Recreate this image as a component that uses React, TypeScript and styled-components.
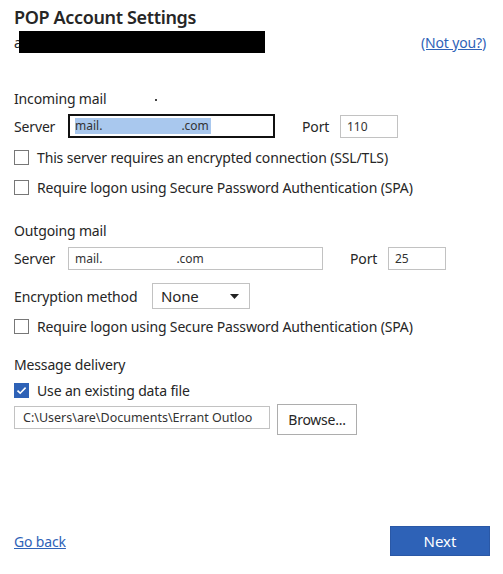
import React, { FC } from "react";
import styled, { createGlobalStyle } from "styled-components";

const GlobalStyle = createGlobalStyle`
  * { box-sizing: border-box; }
  body {
    margin: 0;
    background: #ffffff;
    font-family: "Noto Sans", "Open Sans", sans-serif;
    color: #262626;
  }
`;

const COLORS = {
  text: "#262626",
  link: "#2f63b8",
  border: "#c2c2c2",
  accent: "#2e62b7",
  selection: "#a9c8ee",
};

interface CheckProps {
  checked?: boolean;
  label: string;
  top: number;
}

const CheckRow: FC<CheckProps> = ({ checked, label, top }) => (
  <CheckLine $top={top}>
    <Box $checked={checked}>
      {checked && (
        <svg width="11" height="9" viewBox="0 0 11 9">
          <path d="M1.5 4.6 L4.2 7.2 L9.6 1.6" fill="none" stroke="#fff" strokeWidth="1.6" />
        </svg>
      )}
    </Box>
    <span>{label}</span>
  </CheckLine>
);

export default function App() {
  return (
    <>
      <GlobalStyle />
      <Page>
        <Title>POP Account Settings</Title>
        <AccountRow>
          <Account>
            a<Redacted />
          </Account>
          <Link>(Not you?)</Link>
        </AccountRow>

        <Heading $top={35}>
          Incoming mail<Dot />
        </Heading>
        <FieldRow $top={4}>
          <Label $width={54}>Server</Label>
          <TextBox $width={207} $focused>
            <Selected>
              mail.<Gap $width={79} />.com
            </Selected>
          </TextBox>
          <PortLabel>Port</PortLabel>
          <TextBox $width={58}>110</TextBox>
        </FieldRow>
        <CheckRow top={8} label="This server requires an encrypted connection (SSL/TLS)" />
        <CheckRow top={10} label="Require logon using Secure Password Authentication (SPA)" />

        <Heading $top={24}>Outgoing mail</Heading>
        <FieldRow $top={4}>
          <Label $width={54}>Server</Label>
          <TextBox $width={255}>
            mail.<Gap $width={74} />.com
          </TextBox>
          <PortLabel>Port</PortLabel>
          <TextBox $width={58}>25</TextBox>
        </FieldRow>
        <FieldRow $top={12}>
          <Label $width={138}>Encryption method</Label>
          <Select>
            <span>None</span>
            <svg width="9" height="5" viewBox="0 0 9 5">
              <path d="M0 0 H9 L4.5 5 Z" fill="#222" />
            </svg>
          </Select>
        </FieldRow>
        <CheckRow top={7} label="Require logon using Secure Password Authentication (SPA)" />

        <Heading $top={19}>Message delivery</Heading>
        <CheckRow top={5} checked label="Use an existing data file" />
        <PathRow>
          <PathBox>C:\Users\are\Documents\Errant Outloo</PathBox>
          <Browse>Browse...</Browse>
        </PathRow>

        <Footer>
          <Link>Go back</Link>
          <Next>Next</Next>
        </Footer>
      </Page>
    </>
  );
}

const Page = styled.div`
  height: 574px;
  padding: 0 14px 18px 14px;
  display: flex;
  flex-direction: column;
  font-size: 14px;
  letter-spacing: -0.15px;
`;

const Title = styled.h1`
  margin: 6px 0 0 0;
  height: 22px;
  line-height: 22px;
  font-size: 18px;
  font-weight: 600;
  letter-spacing: -0.35px;
  color: ${COLORS.text};
`;

const AccountRow = styled.div`
  margin-top: 2px;
  height: 24px;
  display: flex;
  align-items: center;
  justify-content: space-between;
  padding-right: 3px;
`;

const Account = styled.div`
  display: flex;
  align-items: center;
`;

const Redacted = styled.span`
  display: inline-block;
  width: 246px;
  height: 22px;
  background: #000;
  margin-left: -3px;
`;

const Link = styled.a`
  color: ${COLORS.link};
  text-decoration: underline;
  cursor: pointer;
  font-size: 14px;
`;

const Heading = styled.div<{ $top: number }>`
  margin-top: ${({ $top }) => $top}px;
  height: 20px;
  line-height: 20px;
  display: flex;
  align-items: center;
`;

const Dot = styled.span`
  width: 2px;
  height: 2px;
  background: #444;
  margin-left: 49px;
  margin-top: 2px;
`;

const FieldRow = styled.div<{ $top: number }>`
  margin-top: ${({ $top }) => $top}px;
  height: 26px;
  display: flex;
  align-items: center;
`;

const Label = styled.span<{ $width: number }>`
  width: ${({ $width }) => $width}px;
  flex-shrink: 0;
`;

const PortLabel = styled.span`
  margin-left: 27px;
  width: 38px;
`;

const TextBox = styled.div<{ $width: number; $focused?: boolean }>`
  width: ${({ $width }) => $width}px;
  height: ${({ $focused }) => ($focused ? 24 : 23)}px;
  border: ${({ $focused }) => ($focused ? "2px solid #111" : `1px solid ${COLORS.border}`)};
  padding-left: ${({ $focused }) => ($focused ? 5 : 6)}px;
  display: flex;
  align-items: center;
  font-size: 12px;
  letter-spacing: 0;
  color: #333;
  white-space: pre;
`;

const Selected = styled.span`
  background: ${COLORS.selection};
  line-height: 16px;
  display: flex;
  align-items: center;
  padding-right: 2px;
`;

const Gap = styled.span<{ $width: number }>`
  display: inline-block;
  width: ${({ $width }) => $width}px;
`;

const Select = styled.div`
  width: 98px;
  height: 26px;
  border: 1px solid ${COLORS.border};
  padding: 0 10px 0 8px;
  display: flex;
  align-items: center;
  justify-content: space-between;
  font-size: 15px;
`;

const CheckLine = styled.div<{ $top: number }>`
  margin-top: ${({ $top }) => $top}px;
  height: 20px;
  display: flex;
  align-items: center;
  gap: 8px;
`;

const Box = styled.span<{ $checked?: boolean }>`
  width: 15px;
  height: 15px;
  flex-shrink: 0;
  border: 1px solid ${({ $checked }) => ($checked ? COLORS.accent : "#777")};
  background: ${({ $checked }) => ($checked ? COLORS.accent : "#fff")};
  display: flex;
  align-items: center;
  justify-content: center;
`;

const PathRow = styled.div`
  margin-top: 4px;
  display: flex;
  align-items: flex-start;
  gap: 7px;
`;

const PathBox = styled.div`
  margin-top: 2px;
  width: 256px;
  height: 23px;
  border: 1px solid ${COLORS.border};
  padding-left: 8px;
  display: flex;
  align-items: center;
  font-size: 12.5px;
  letter-spacing: 0;
  color: #333;
  white-space: nowrap;
  overflow: hidden;
`;

const Browse = styled.button`
  width: 80px;
  height: 31px;
  border: 1px solid #adadad;
  background: #fff;
  font-family: inherit;
  font-size: 14px;
  letter-spacing: -0.25px;
  color: ${COLORS.text};
  padding: 0;
`;

const Footer = styled.div`
  margin-top: auto;
  display: flex;
  align-items: center;
  justify-content: space-between;
`;

const Next = styled.button`
  width: 100px;
  height: 30px;
  background: ${COLORS.accent};
  border: 1px solid #2a58a6;
  color: #fff;
  font-family: inherit;
  font-size: 15px;
  margin-right: -1px;
`;
